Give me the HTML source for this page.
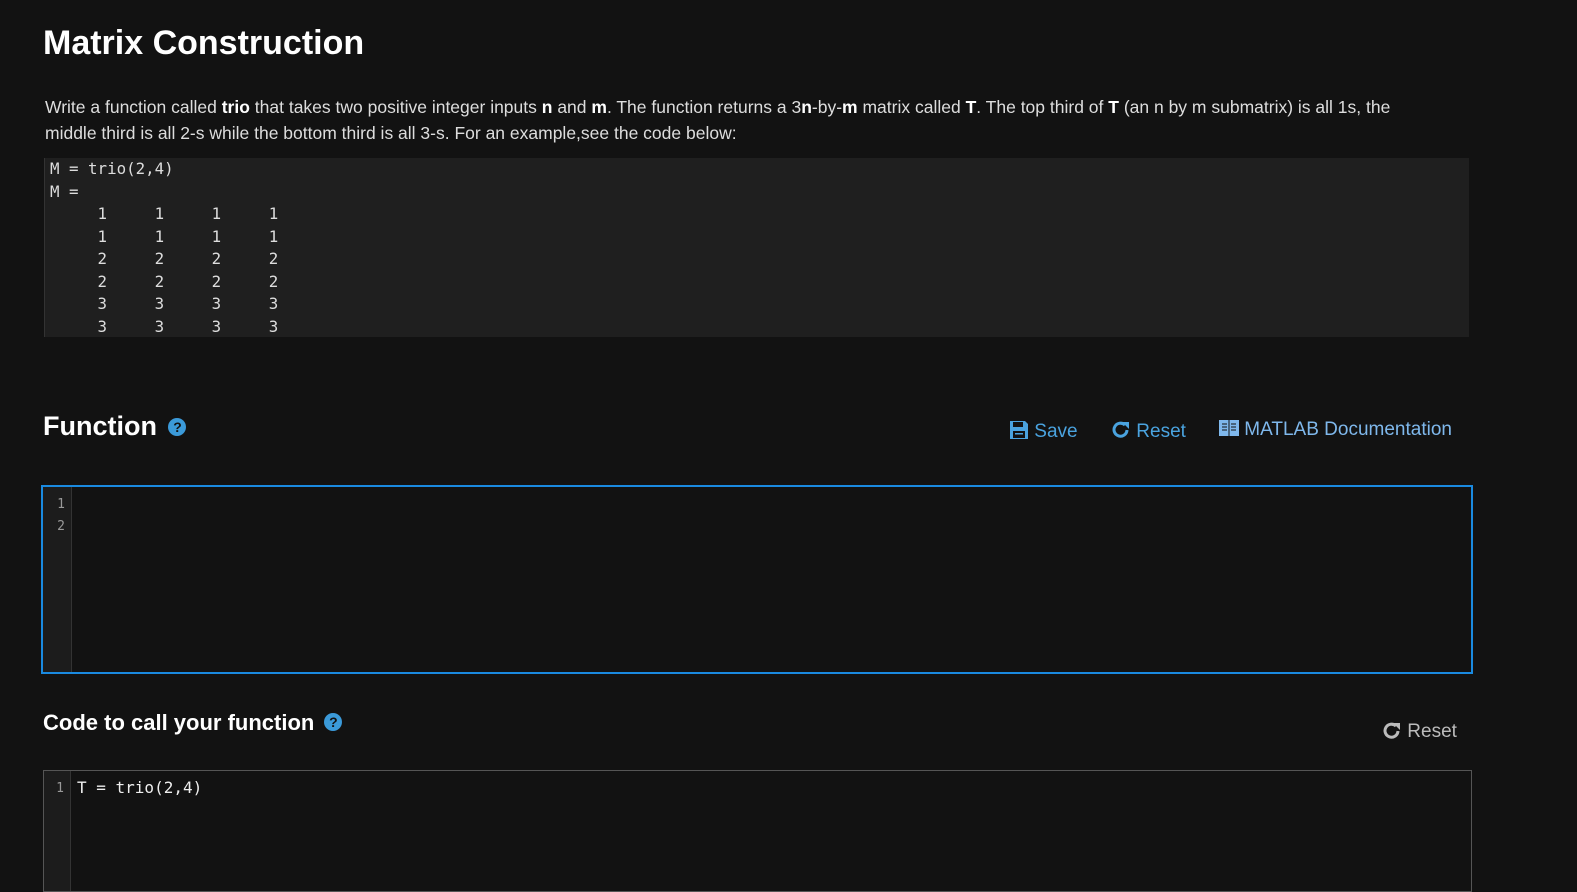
<!DOCTYPE html>
<html><head><meta charset="utf-8"><style>
body{margin:0;width:1577px;height:878px;background:#121212;color:#e6e6e6;font-family:"Liberation Sans",sans-serif;overflow:hidden;position:relative}
.a{position:absolute}
h1{position:absolute;left:43px;top:24px;margin:0;font-size:34px;font-weight:bold;color:#fff}
.p{left:45px;top:94px;width:1370px;font-size:17.5px;line-height:26px;color:#ddd}
.p b{color:#fff}
.mono{font-family:"DejaVu Sans Mono","Liberation Mono",monospace}
.code{left:44px;top:158px;width:1424px;height:179px;background:#1f1f1f;border-left:1px solid #333}
.code pre{margin:0;padding:0 0 0 5px;font-size:15.8px;line-height:22.5px;color:#ddd}
h2{position:absolute;margin:0;font-weight:bold;color:#fff}
.q{display:inline-block;width:18px;height:18px;border-radius:50%;background:#3b9ad9;color:#121212;font-size:14px;text-align:center;line-height:18px;font-weight:bold;vertical-align:3px;margin-left:4px}
.lnk{color:#4aa3df;font-size:19px}
.ed{left:41px;top:485px;width:1428px;height:185px;border:2px solid #1a8ae0;background:#121212}
.gut{position:absolute;left:0;top:0;width:28px;height:100%;background:#1c1c1c;border-right:1px solid #333}
.gut div{font-family:"DejaVu Sans Mono",monospace;font-size:13px;color:#999;text-align:right;padding-right:6px;line-height:22px}
.ed2{left:43px;top:770px;width:1427px;height:120px;border:1px solid #555;background:#121212}
</style></head><body>
<h1>Matrix Construction</h1>
<div class="a p">Write a function called <b>trio</b> that takes two positive integer inputs <b>n</b> and <b>m</b>. The function returns a 3<b>n</b>-by-<b>m</b> matrix called <b>T</b>. The top third of <b>T</b> (an n by m submatrix) is all 1s, the middle third is all 2-s while the bottom third is all 3-s. For an example,see the code below:</div>
<div class="a code"><pre class="mono">M = trio(2,4)
M =
     1     1     1     1
     1     1     1     1
     2     2     2     2
     2     2     2     2
     3     3     3     3
     3     3     3     3</pre></div>
<h2 style="left:43px;top:411px;font-size:27px">Function <span class="q">?</span></h2>
<div class="a lnk" style="left:1009px;top:420px"><svg width="20" height="20" viewBox="0 0 20 20" style="vertical-align:-3px"><path d="M1 1h15l3 3v15H1z" fill="#4aa3df"/><rect x="4" y="2" width="10" height="5" fill="#121212"/><rect x="4" y="11" width="12" height="7" fill="#121212"/><rect x="6" y="13" width="8" height="1.5" fill="#4aa3df"/></svg> Save</div>
<div class="a lnk" style="left:1111px;top:420px"><svg width="20" height="20" viewBox="0 0 20 20" style="vertical-align:-3px"><path d="M16 10a6.5 6.5 0 1 1-2-5" fill="none" stroke="#4aa3df" stroke-width="3"/><path d="M11 2h7v7z" fill="#4aa3df"/></svg> Reset</div>
<div class="a lnk" style="left:1219px;top:419px;color:#7fb8ec"><svg width="20" height="18" viewBox="0 0 20 18" style="vertical-align:-2px"><rect x="0" y="1" width="20" height="16" fill="#7fb8ec"/><rect x="9.5" y="1" width="1" height="16" fill="#121212"/><path d="M3 5h5M3 8h5M3 11h5M12 5h5M12 8h5M12 11h5" stroke="#121212" stroke-width="1"/></svg> MATLAB Documentation</div>
<div class="a ed"><div class="gut"><div style="padding-top:7px">1</div><div>2</div></div></div>
<h2 style="left:43px;top:710px;font-size:22px">Code to call your function <span class="q">?</span></h2>
<div class="a" style="left:1382px;top:721px;font-size:19px;color:#bbb"><svg width="20" height="20" viewBox="0 0 20 20" style="vertical-align:-4px"><path d="M16 10a6.5 6.5 0 1 1-2-5" fill="none" stroke="#bbb" stroke-width="3"/><path d="M11 2h7v7z" fill="#bbb"/></svg> Reset</div>
<div class="a ed2"><div class="gut" style="width:26px"><div style="padding-top:7px">1</div></div><div class="a mono" style="left:33px;top:7px;font-size:16px;color:#eee">T = trio(2,4)</div></div>
</body></html>
